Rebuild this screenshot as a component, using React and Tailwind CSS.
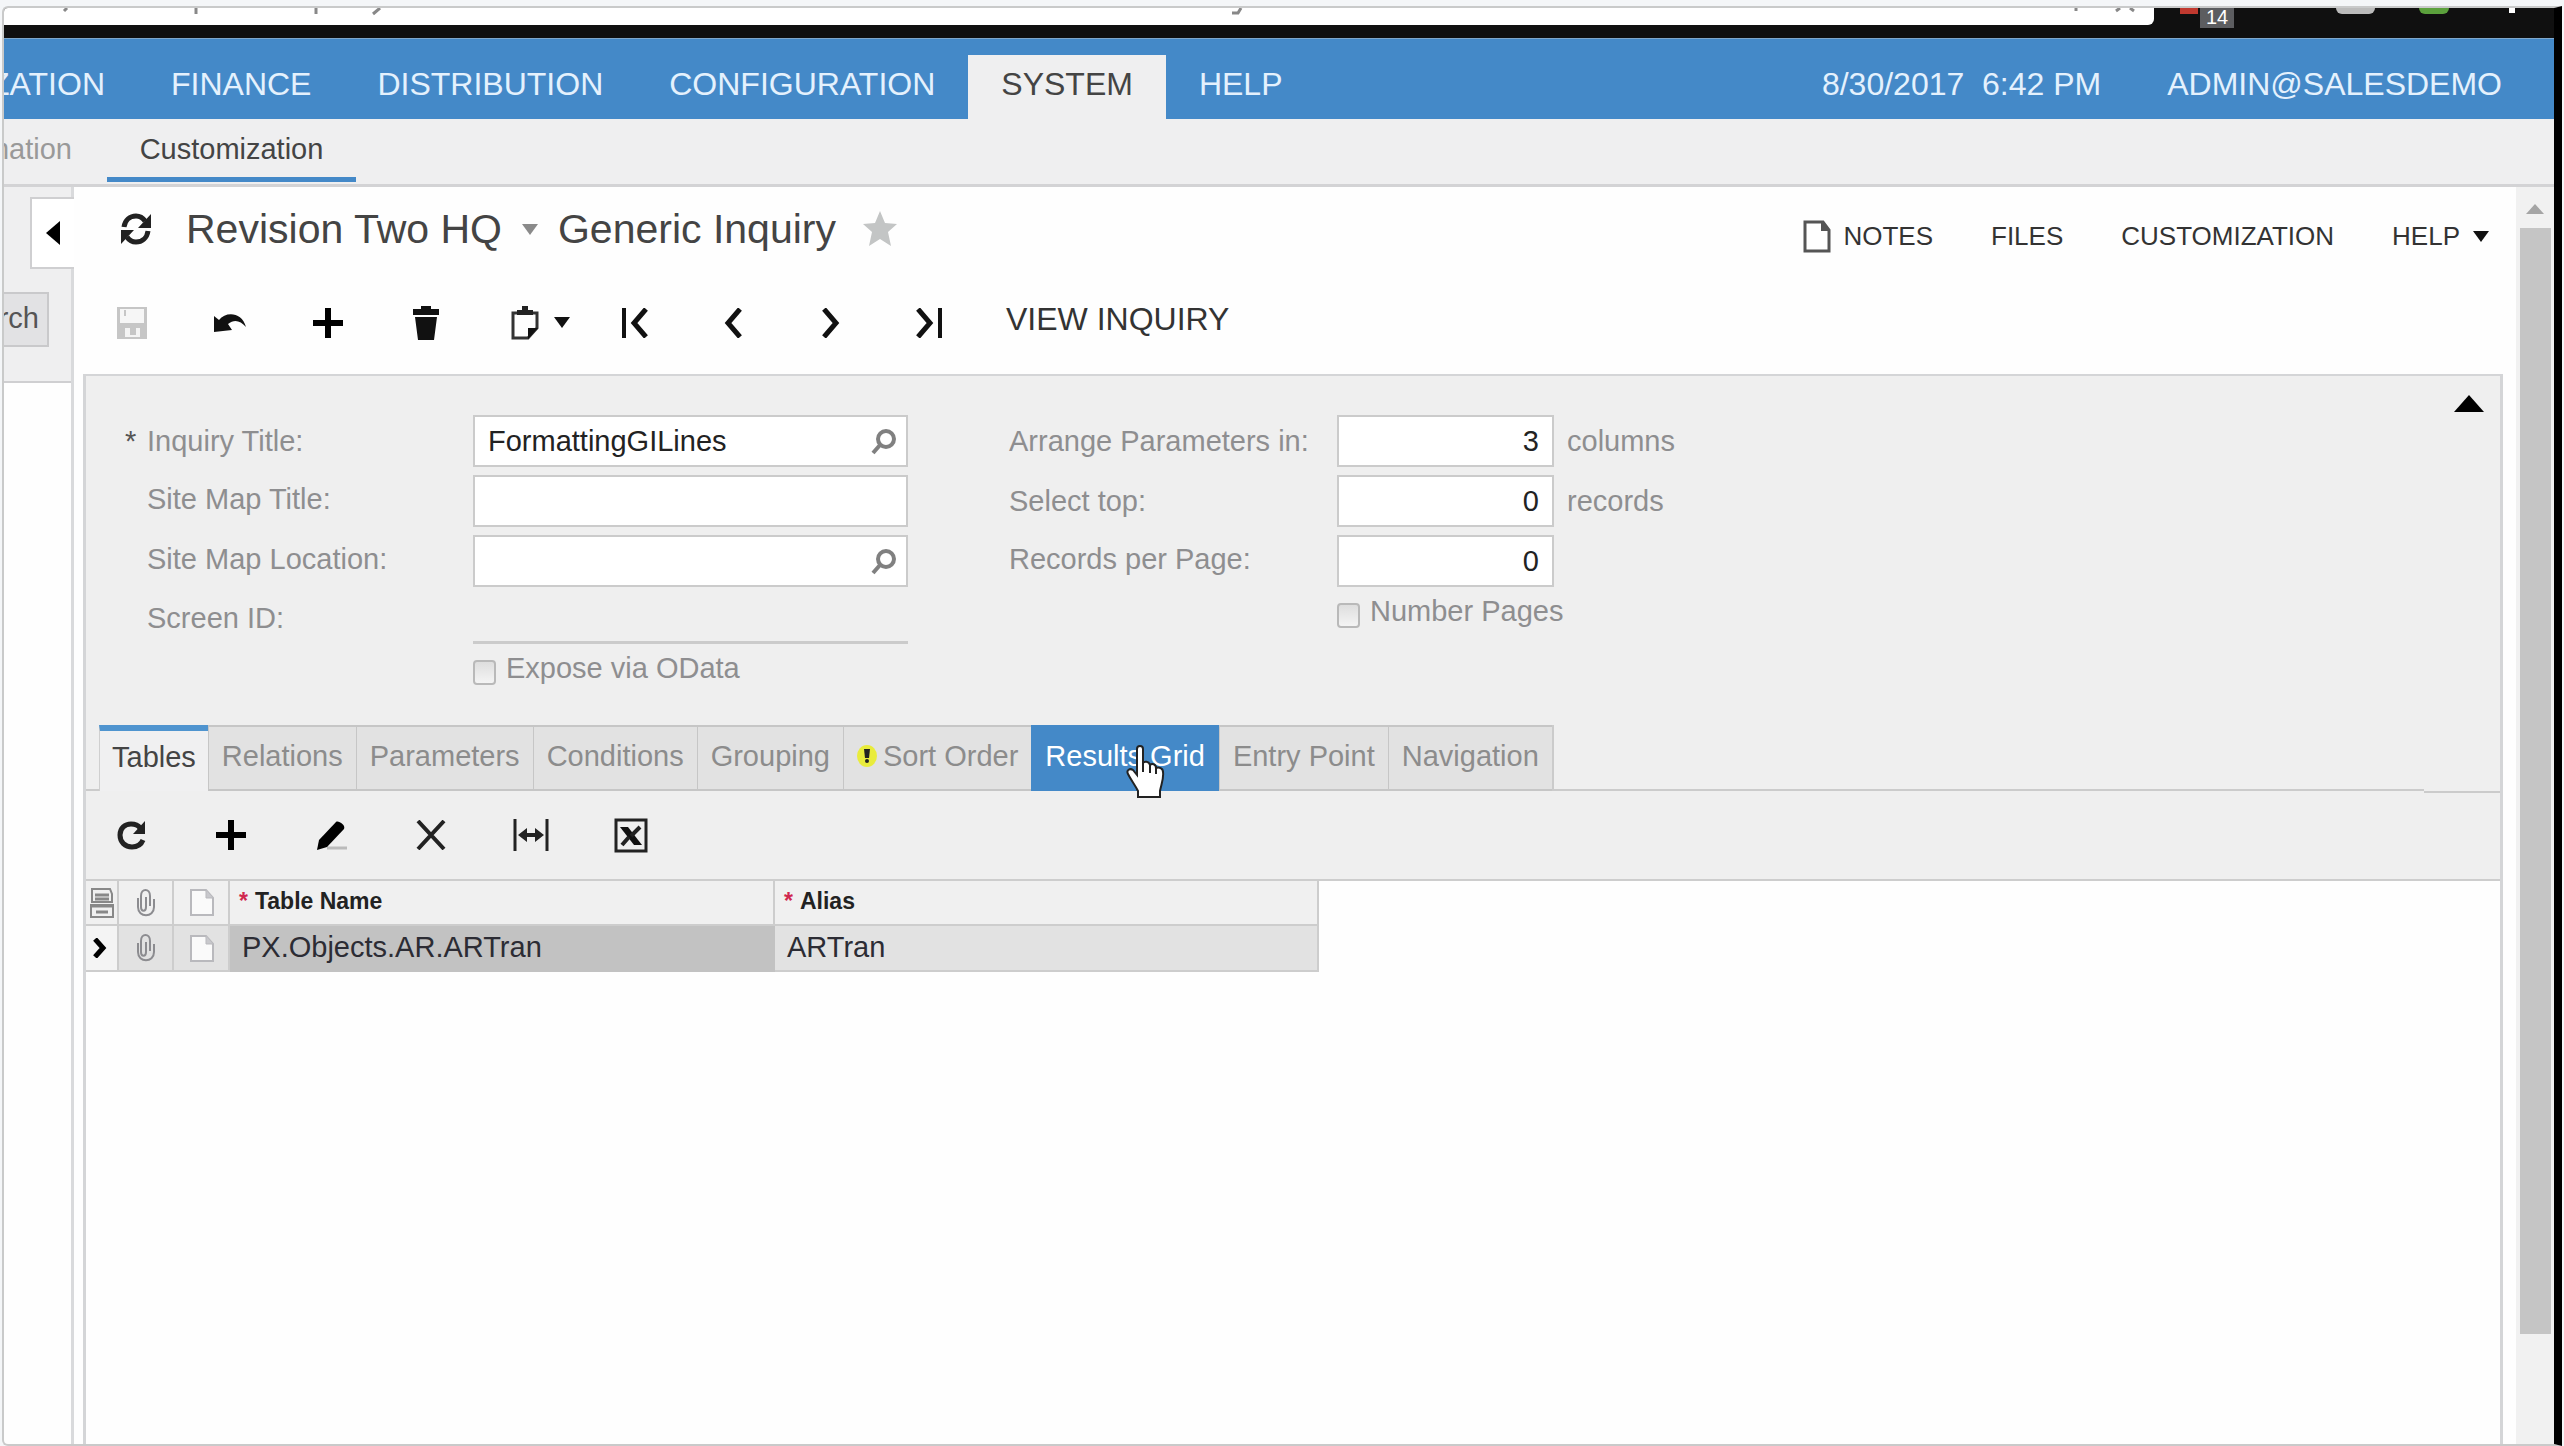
import React, { useState } from 'react';

const mainMenu = ['FINANCE', 'DISTRIBUTION', 'CONFIGURATION', 'SYSTEM', 'HELP'];

const tabs = [
  'Tables',
  'Relations',
  'Parameters',
  'Conditions',
  'Grouping',
  'Sort Order',
  'Results Grid',
  'Entry Point',
  'Navigation',
];

const rows = [{ tableName: 'PX.Objects.AR.ARTran', alias: 'ARTran' }];

/* ---------- Icons ---------- */

const SyncIcon = () => (
  <svg width="34" height="34" viewBox="0 0 34 34" fill="none" stroke="#222" strokeWidth="5">
    <path d="M5 15C6 8 11 4 17 4c4 0 7 2 9 5" />
    <path d="M29 19c-1 7-6 11-12 11-4 0-7-2-9-5" />
    <path d="M32 2v14H19zM2 32V18h13z" fill="#222" stroke="none" />
  </svg>
);

const StarIcon = () => (
  <svg width="36" height="36" viewBox="0 0 36 36" fill="#c3c5c5">
    <path d="M18 0l5 12 12 1-9 8 3 14-11-7-11 7 3-14-9-8 12-1z" />
  </svg>
);

const CaretDown = ({ color = '#111' }) => (
  <svg width="16" height="11" viewBox="0 0 16 11" fill={color}>
    <path d="M0 0h16L8 11z" />
  </svg>
);

const SaveIcon = () => (
  <svg width="30" height="32" viewBox="0 0 30 32">
    <path d="M0 0h30v32H0z" fill="#c6c6c6" />
    <path d="M3 2h24v14H3z" fill="#f6f6f6" />
    <path d="M8 3v6" stroke="#c6c6c6" strokeWidth="2" />
    <path d="M8 21h15v9H8z" fill="#f4f4f4" />
    <path d="M13 21h6v7h-6z" fill="#c6c6c6" />
  </svg>
);

const UndoIcon = () => (
  <svg width="34" height="20" viewBox="0 0 34 20" fill="#111">
    <path d="M1 3l5 4C13-2 29-1 33 14c-6-7-12-8-18-3l4 6-18 2z" />
  </svg>
);

const PlusIcon = () => (
  <svg width="30" height="30" viewBox="0 0 30 30" stroke="#000" strokeWidth="6">
    <path d="M15 0v30M0 15h30" />
  </svg>
);

const TrashIcon = () => (
  <svg width="26" height="34" viewBox="0 0 26 34" fill="#111">
    <path d="M8 3V0h10v3h8v6H0V3zM2 11h22l-3 23H5z" />
  </svg>
);

const ClipboardIcon = () => (
  <svg width="28" height="34" viewBox="0 0 28 34" fill="none" stroke="#333" strokeWidth="3">
    <path d="M17 32H2V7h24v15z" />
    <path d="M17 33V22h10z" fill="#111" stroke="none" />
    <path d="M6 9V4h5V0h6v4h5v5z" fill="#222" stroke="none" />
  </svg>
);

const FirstIcon = () => (
  <svg width="28" height="30" viewBox="0 0 28 30" fill="none" stroke="#111" strokeWidth="5">
    <path d="M3 0v30" strokeWidth="4" />
    <path d="M25 1L13 15l12 14" />
  </svg>
);

const PrevIcon = () => (
  <svg width="20" height="30" viewBox="0 0 20 30" fill="none" stroke="#111" strokeWidth="5">
    <path d="M17 1L5 15l12 14" />
  </svg>
);

const NextIcon = () => (
  <svg width="20" height="30" viewBox="0 0 20 30" fill="none" stroke="#111" strokeWidth="5">
    <path d="M3 1l12 14L3 29" />
  </svg>
);

const LastIcon = () => (
  <svg width="28" height="30" viewBox="0 0 28 30" fill="none" stroke="#111" strokeWidth="5">
    <path d="M25 0v30" strokeWidth="4" />
    <path d="M3 1l12 14L3 29" />
  </svg>
);

const PageIcon = () => (
  <svg width="28" height="33" viewBox="0 0 28 33" fill="#fff" stroke="#555" strokeWidth="3">
    <path d="M2 2h18l6 8v21H2z" />
    <path d="M19 2v8h7" fill="#555" strokeWidth="2" />
  </svg>
);

const SearchIcon = () => (
  <svg width="26" height="26" viewBox="0 0 26 26" fill="none" stroke="#808080">
    <circle cx="15" cy="10" r="8" strokeWidth="4" />
    <path d="M9 16l-7 8" strokeWidth="4" />
  </svg>
);

const ReloadIcon = () => (
  <svg width="30" height="30" viewBox="0 0 30 30" fill="none" stroke="#222" strokeWidth="5">
    <path d="M27 20c-2 5-6 7-11 7C9 27 4 22 4 15S9 4 15 4c4 0 7 1 9 4" />
    <path d="M29 1v13H17z" fill="#222" stroke="none" />
  </svg>
);

const PencilIcon = () => (
  <svg width="32" height="31" viewBox="0 0 32 31">
    <path d="M12 28h20" stroke="#bbb" strokeWidth="3" />
    <path d="M4 20L21 2c2-2 10 3 8 7L12 27 2 30z" fill="#000" />
  </svg>
);

const DeleteIcon = () => (
  <svg width="30" height="30" viewBox="0 0 30 30" stroke="#222" strokeWidth="4">
    <path d="M2 1l26 28M28 1L2 29" />
  </svg>
);

const FitIcon = () => (
  <svg width="36" height="32" viewBox="0 0 36 32" stroke="#222" strokeWidth="3">
    <path d="M2 0v32M34 0v32" />
    <path d="M10 16h16" strokeWidth="4" />
    <path d="M5 16l9-7v14zM31 16l-9-7v14z" stroke="none" fill="#222" />
  </svg>
);

const ExcelIcon = () => (
  <svg width="34" height="35" viewBox="0 0 34 35" fill="none" stroke="#222">
    <path d="M2 2h30v31H2z" strokeWidth="3" />
    <path d="M6 9h8l14 18h-8z" fill="#111" stroke="none" />
    <path d="M26 9L17 18M15 19l-7 8" strokeWidth="4" />
  </svg>
);

const LayoutIcon = () => (
  <svg width="24" height="30" viewBox="0 0 24 30" fill="none" stroke="#888" strokeWidth="2">
    <path d="M2 1h18l2 5v8H2zM1 17h22v12H1z" />
    <path d="M5 7h14M5 11h14M6 24h12M1 18h22" strokeWidth="3" />
  </svg>
);

const ClipIcon = () => (
  <svg width="20" height="28" viewBox="0 0 20 28" fill="none" stroke="#8c8c90" strokeWidth="2">
    <path d="M2 9v9c0 11 16 11 16 0V10M14 17V7c0-8-9-8-9 0v11c0 5 5 5 5 0V8" />
  </svg>
);

const NoteIcon = () => (
  <svg width="24" height="27" viewBox="0 0 24 27" fill="#fafafa" stroke="#b9b9bd" strokeWidth="2">
    <path d="M1 1h15l7 8v17H1z" />
    <path d="M16 1v8h7" fill="#c8c8cc" strokeWidth="1" />
  </svg>
);

const WarningIcon = () => (
  <svg width="20" height="24" viewBox="0 0 20 24">
    <ellipse cx="10" cy="12" rx="10" ry="11" fill="#e9ec3c" />
    <path d="M7 5h6l-1 9H8z" fill="#222" />
    <circle cx="10" cy="17" r="2" fill="#222" />
  </svg>
);

const HandCursor = () => (
  <svg width="40" height="54" viewBox="0 0 40 54" fill="#fff" stroke="#222" strokeWidth="2">
    <path d="M12 52v-6C9 40 5 35 2 29c-2-4 2-6 5-4l4 5V4c0-4 6-4 6 0v14c1-2 6-2 7 2 2-2 6-1 6 3 3-1 7 0 7 4 1 7-2 13-3 19v6z" />
    <path d="M17 18v9M24 20v8M30 23v6" />
  </svg>
);

/* ---------- Page parts ---------- */

// bottom edge of the browser's address bar and its extension buttons
const BrowserStrip = () => (
  <div className="flex h-[31px] bg-[#101010] border-b border-[#7fa8cc]">
    <div className="flex-1 h-[17px] bg-white rounded-br-md overflow-hidden">
      <svg width="2140" height="8" viewBox="0 0 2140 8" fill="none" stroke="#888" strokeWidth="3">
        <path d="M63 0l-3 3M192 0v6M312 0v6M376 0l-7 6M1228 5h6l3-5M2072 0v3M2112 3l4-3M2126 0l4 3" />
      </svg>
    </div>
    <div className="flex items-start w-[400px] shrink-0">
      <span className="ml-[26px] w-[18px] h-[6px] bg-[#c0392f]" />
      <span className="ml-[2px] w-[34px] h-[20px] bg-[#5c5d60] text-white text-[20px] leading-[18px] text-center">14</span>
      <span className="ml-[102px] w-[39px] h-[6px] rounded-b-md bg-[#bbb]" />
      <span className="ml-[44px] w-[30px] h-[6px] rounded-b-full bg-[#5ba03c]" />
      <span className="ml-[60px] w-[6px] h-[5px] bg-white" />
    </div>
  </div>
);

const TopMenu = () => (
  <nav className="flex items-end h-[80px] bg-[#4489c8] text-[#e4f1fd] text-[32px] leading-[58px]">
    <a href="#organization" className="flex justify-end w-[101px] h-[64px] mr-[33px] overflow-hidden">ZATION</a>
    {mainMenu.map((item) => (
      <a
        key={item}
        href={'#' + item.toLowerCase()}
        className={item === 'SYSTEM' ? 'px-[33px] h-[64px] bg-[#efeff0] text-[#444]' : 'px-[33px] h-[64px]'}
      >
        {item}
      </a>
    ))}
    <span className="ml-auto h-[64px] whitespace-pre">8/30/2017  6:42 PM</span>
    <a href="#user" className="ml-[66px] mr-[52px] h-[64px]">ADMIN@SALESDEMO</a>
  </nav>
);

const SubMenu = () => (
  <div className="flex h-[68px] bg-[#efeff0] border-b-3 border-[#d3d3d5] leading-[61px]">
    <a href="#automation" className="flex justify-end w-[68px] overflow-hidden text-[#999]">mation</a>
    <a href="#customization" className="ml-[35px] w-[249px] h-[63px] border-b-5 border-[#4489c8] text-center text-[#444]">
      Customization
    </a>
  </div>
);

const Sidebar = () => (
  <aside className="flex flex-col w-[70px] shrink-0 border-r-3 border-[#d9dadc]">
    <div className="h-[196px] pt-[10px] bg-[#efeff0] border-b-2 border-[#cfcfd1]">
      <button
        aria-label="Collapse menu"
        className="relative flex items-center justify-center w-[44px] h-[72px] ml-[26px] bg-white border-2 border-r-0 border-[#cfcfd1]"
      >
        <svg width="14" height="24" viewBox="0 0 14 24"><path d="M14 0v24L0 12z" fill="#000" /></svg>
      </button>
      <button className="flex justify-end w-[45px] h-[55px] mt-[23px] pr-[8px] overflow-hidden bg-[#e2e2e4] border-2 border-l-0 border-[#c9c9cb] leading-[48px] text-[#555]">
        rch
      </button>
    </div>
  </aside>
);

const TitleRow = () => (
  <header className="flex items-center h-[84px] pl-[36px] pr-[14px]">
    <button aria-label="Refresh"><SyncIcon /></button>
    <h1 className="ml-[33px] text-[41px] leading-[48px] text-[#444]">Revision Two HQ</h1>
    <button aria-label="Branches" className="mx-[20px]"><CaretDown color="#8a8a8a" /></button>
    <h2 className="text-[41px] leading-[48px] text-[#444]">Generic Inquiry</h2>
    <button aria-label="Add to favorites" className="ml-[26px]"><StarIcon /></button>
    <div className="flex items-center gap-[58px] ml-auto pt-[14px] text-[26px] leading-[32px] text-[#333]">
      <button className="flex items-center gap-[12px]"><PageIcon />NOTES</button>
      <button>FILES</button>
      <button>CUSTOMIZATION</button>
      <button className="flex items-center gap-[13px]">HELP<CaretDown /></button>
    </div>
  </header>
);

const ActionBar = () => {
  const button = 'flex items-center justify-center w-[98px] h-[60px]';
  return (
    <div className="flex items-center h-[103px]">
      <button aria-label="Save" className={button} disabled><SaveIcon /></button>
      <button aria-label="Undo" className={button}><UndoIcon /></button>
      <button aria-label="Add" className={button}><PlusIcon /></button>
      <button aria-label="Delete" className={button}><TrashIcon /></button>
      <button aria-label="Clipboard" className="flex items-center gap-[15px] w-[111px] h-[60px] pl-[36px]">
        <ClipboardIcon />
        <CaretDown />
      </button>
      <button aria-label="First" className={button}><FirstIcon /></button>
      <button aria-label="Previous" className={button}><PrevIcon /></button>
      <button aria-label="Next" className={button}><NextIcon /></button>
      <button aria-label="Last" className={button}><LastIcon /></button>
      <button className="pl-[28px] pb-[8px] text-[32px] leading-[40px] text-[#333]">VIEW INQUIRY</button>
    </div>
  );
};

const CheckField = ({ id, label }) => (
  <div className="flex items-center gap-[10px] h-[40px]">
    <input
      id={id}
      type="checkbox"
      className="appearance-none w-[23px] h-[25px] mt-[9px] rounded-sm border-2 border-[#b9b9b9] bg-linear-to-b from-[#dedede] to-[#f4f4f4]"
    />
    <label htmlFor={id}>{label}</label>
  </div>
);

const InquiryForm = () => {
  const [title, setTitle] = useState('FormattingGILines');
  const input = 'w-full h-[52px] bg-white border-2 border-[#cbcbcb] text-[#222]';

  return (
    <form className="flex items-start pt-[39px] pb-[37px] pl-[39px] text-[#8e8e90] leading-[40px]">
      <div className="grid grid-cols-[348px_435px] gap-y-2 items-center">
        <label htmlFor="title"><span className="inline-block w-[22px] text-[#555]">*</span>Inquiry Title:</label>
        <div className="relative">
          <input id="title" className={input + ' px-[13px]'} value={title} onChange={(e) => setTitle(e.target.value)} />
          <button type="button" aria-label="Find inquiry" className="absolute right-[11px] top-[14px]"><SearchIcon /></button>
        </div>
        <label htmlFor="map-title" className="pl-[22px] pb-[4px]">Site Map Title:</label>
        <input id="map-title" className={input + ' px-[13px]'} />
        <label htmlFor="map-location" className="pl-[22px] pb-[4px]">Site Map Location:</label>
        <div className="relative">
          <input id="map-location" className={input + ' px-[13px]'} />
          <button type="button" aria-label="Find location" className="absolute right-[11px] top-[14px]"><SearchIcon /></button>
        </div>
        <label htmlFor="screen-id" className="pl-[22px] pb-[4px]">Screen ID:</label>
        <input id="screen-id" readOnly className="w-full h-[49px] border-b-3 border-[#cbcbcb]" />
        <div className="col-start-2 -mt-1"><CheckField id="odata" label="Expose via OData" /></div>
      </div>

      <div className="grid grid-cols-[328px_217px_auto] gap-y-2 items-center ml-[101px]">
        <label htmlFor="columns">Arrange Parameters in:</label>
        <input id="columns" inputMode="numeric" className={input + ' px-[13px] text-right'} defaultValue="3" />
        <span className="pl-[13px]">columns</span>
        <label htmlFor="top">Select top:</label>
        <input id="top" inputMode="numeric" className={input + ' px-[13px] text-right'} defaultValue="0" />
        <span className="pl-[13px]">records</span>
        <label htmlFor="per-page" className="pb-[4px]">Records per Page:</label>
        <input id="per-page" inputMode="numeric" className={input + ' px-[13px] text-right'} defaultValue="0" />
        <div className="col-start-2 col-span-2 -mt-1"><CheckField id="number-pages" label="Number Pages" /></div>
      </div>

      <button type="button" aria-label="Collapse form" className="ml-auto mr-[16px] -mt-[20px]">
        <svg width="30" height="17" viewBox="0 0 30 17"><path d="M15 0l15 17H0z" fill="#000" /></svg>
      </button>
    </form>
  );
};

const tabStyle = (tab) => {
  if (tab === 'Tables') return 'border-t-6 border-t-[#4f94cf] border-l border-l-[#cfcfcf] bg-[#f0f0f1] text-[#444] px-[12px] pb-[9px]';
  if (tab === 'Results Grid') return 'bg-[#4489c8] text-white px-[14px] pb-[5px]';
  return 'border-y-2 border-l border-[#c6c6c6] bg-[#e2e2e2] text-[#8c8c8c] px-[13px] pb-[5px]';
};

const TabStrip = () => (
  <div role="tablist" className="flex h-[66px] leading-[56px]">
    <div className="w-[13px] border-b-2 border-[#cbcbcb]" />
    {tabs.map((tab) => (
      <button key={tab} role="tab" className={'relative flex items-center ' + tabStyle(tab)}>
        {tab === 'Sort Order' && <span className="mr-[6px]"><WarningIcon /></span>}
        {tab}
        {tab === 'Results Grid' && (
          <span className="absolute left-[95px] top-[20px] z-10"><HandCursor /></span>
        )}
      </button>
    ))}
    <div className="flex-1 border-b-2 border-l-2 border-[#cbcbcb]" />
    <div className="w-[76px] h-[68px] border-b-2 border-[#cbcbcb]" />
  </div>
);

const GridToolbar = () => {
  const button = 'flex items-center justify-center w-[40px] h-[40px]';
  return (
    <div className="flex items-center gap-[60px] h-[90px] pl-[25px] border-b-2 border-[#cdcdcd]">
      <button aria-label="Refresh grid" className={button}><ReloadIcon /></button>
      <button aria-label="Add row" className={button}><PlusIcon /></button>
      <button aria-label="Edit row" className={button}><PencilIcon /></button>
      <button aria-label="Delete row" className={button}><DeleteIcon /></button>
      <button aria-label="Fit to screen" className={button}><FitIcon /></button>
      <button aria-label="Export to Excel" className={button}><ExcelIcon /></button>
    </div>
  );
};

const TablesGrid = () => (
  <table className="table-fixed w-[1233px] border-separate border-spacing-0 text-left">
    <thead>
      <tr className="h-[45px] bg-[#f0f0f0] text-[23px] leading-[32px] text-[#222]">
        <th className="w-[33px] border-r-2 border-b-2 border-[#cdcdcd] pl-[4px]"><LayoutIcon /></th>
        <th className="w-[55px] border-r-2 border-b-2 border-[#cdcdcd] pl-[17px]"><ClipIcon /></th>
        <th className="w-[56px] border-r-2 border-b-2 border-[#cdcdcd] pl-[16px]"><NoteIcon /></th>
        <th className="w-[545px] border-r-2 border-b-2 border-[#cdcdcd] pl-[9px] pb-[3px]">
          <span className="mr-[7px] text-[#d0284f]">*</span>Table Name
        </th>
        <th className="w-[544px] border-r-2 border-b-2 border-[#cdcdcd] pl-[9px] pb-[3px]">
          <span className="mr-[7px] text-[#d0284f]">*</span>Alias
        </th>
      </tr>
    </thead>
    <tbody>
      {rows.map((row) => (
        <tr key={row.tableName} className="h-[46px] bg-[#e2e2e2] leading-[40px] text-[#2c2c34]">
          <td className="border-r-2 border-b-2 border-[#cdcdcd] bg-[#f4f4f4] pl-[7px]">
            <svg width="14" height="20" viewBox="0 0 14 20" fill="none" stroke="#000" strokeWidth="5">
              <path d="M2 1l8 9-8 9" />
            </svg>
          </td>
          <td className="border-r-2 border-b-2 border-[#cdcdcd] pl-[17px]"><ClipIcon /></td>
          <td className="border-r-2 border-b-2 border-[#cdcdcd] pl-[16px]"><NoteIcon /></td>
          <td className="border-b-2 border-[#c2c2c2] bg-[#c2c2c2] pl-[12px] pb-[3px]">{row.tableName}</td>
          <td className="border-r-2 border-b-2 border-[#cdcdcd] pl-[12px] pb-[3px]">{row.alias}</td>
        </tr>
      ))}
    </tbody>
  </table>
);

const Scrollbar = () => (
  <div className="flex flex-col items-center w-[38px] shrink-0 pb-[110px] bg-[#f1f1f1]">
    <div className="flex items-center h-[41px] pt-[3px]">
      <svg width="18" height="10" viewBox="0 0 18 10"><path d="M9 0l9 10H0z" fill="#a5a5a5" /></svg>
    </div>
    <div className="flex-1 w-[31px] bg-[#c5c5c5]" />
  </div>
);

const App = () => {
  return (
    <div className="flex flex-col min-h-screen pt-[6px] px-[2px] bg-[#f4f6f8] font-['Liberation_Sans',Arial,sans-serif] text-[29px]">
      <div className="flex flex-col flex-1 bg-[#fefefe] border-2 border-r-8 border-[#c9caca] border-r-black rounded-l-md overflow-hidden">
        <BrowserStrip />
        <TopMenu />
        <SubMenu />
        <div className="flex flex-1">
          <Sidebar />
          <main className="flex flex-col flex-1 pl-[9px] pr-[13px]">
            <TitleRow />
            <ActionBar />
            <section className="flex flex-col flex-1 border-x-3 border-t-2 border-[#d4d5d7]">
              <div className="bg-[#efefef]">
                <InquiryForm />
                <TabStrip />
                <GridToolbar />
              </div>
              <TablesGrid />
            </section>
          </main>
          <Scrollbar />
        </div>
      </div>
    </div>
  );
};

export default App;
